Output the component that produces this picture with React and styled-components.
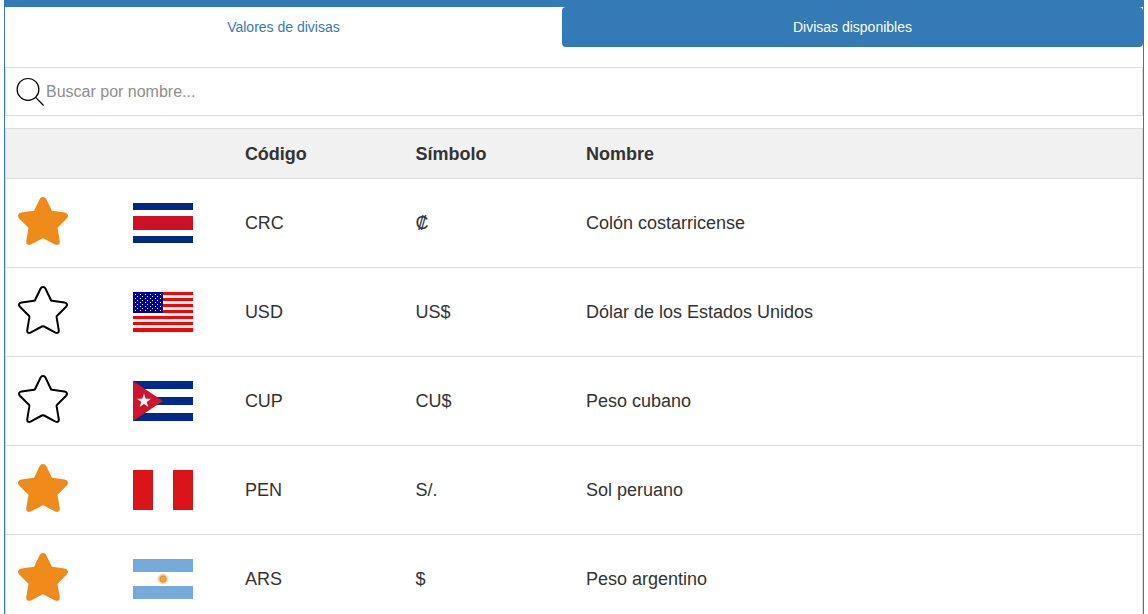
import React, { useCallback, useState } from 'react'
import styled, { createGlobalStyle } from 'styled-components'

const GlobalStyle = createGlobalStyle`
	* {
		box-sizing: border-box;
	}
	body {
		margin: 0;
		background: #fff;
		color: #333;
		font-family: Arial, 'Liberation Sans', sans-serif;
		font-size: 18px;
	}
`

const Panel = styled.main`
	margin: 0 4px;
	border: 1px solid #337ab7;
	border-top-width: 7px;
`

const Tabs = styled.nav`
	display: grid;
	grid-template-columns: 23fr 24fr;
	margin-bottom: 20px;
`

const Tab = styled.a`
	padding: 10px 15px;
	border-radius: 4px;
	background: ${props => (props.$active ? '#337ab7' : 'transparent')};
	color: ${props => (props.$active ? '#fff' : '#337ab7')};
	font-size: 14px;
	line-height: 20px;
	text-align: center;
	text-decoration: none;
`

const SearchBox = styled.label`
	display: flex;
	align-items: center;
	height: 49px;
	margin-bottom: 12px;
	padding: 0 10px;
	border: 1px solid #ddd;

	> svg {
		flex: none;
		width: 30px;
		height: 30px;
	}
`

const SearchInput = styled.input`
	flex: 1;
	min-width: 0;
	height: 100%;
	padding: 0;
	border: 0;
	outline: 0;
	background: transparent;
	color: #333;
	font-family: inherit;
	font-size: 16px;

	&::placeholder {
		color: #8e8e8e;
		opacity: 1;
	}
`

const Table = styled.table`
	width: 100%;
	table-layout: fixed;
	border: 1px solid #ddd;
	border-collapse: collapse;
`

const Col = styled.col`
	width: ${props => props.$width};
`

const HeadRow = styled.tr`
	background: #f1f1f1;
`

const Row = styled.tr`
	border-top: 1px solid #ddd;
`

const HeadCell = styled.th`
	padding: 13px 12px 11px;
	font-weight: bold;
	line-height: 25px;
	text-align: left;
`

const Cell = styled.td`
	padding: 12px;
	line-height: 26px;
	vertical-align: middle;
`

const StarButton = styled.button`
	display: block;
	width: 50px;
	height: 54px;
	padding: 0 0 4px;
	border: 0;
	background: none;
	cursor: pointer;

	> svg {
		display: block;
		width: 50px;
		height: 50px;
	}
`

const FlagImage = styled.svg`
	display: block;
	width: 64px;
	height: 64px;
`

const STAR_PATH =
	'M25 1C26.2 1 27 1.6 27.5 2.7L32.9 14Q33.2 14.7 34 14.8L46.4 16.5C49 16.9 49.8 19 48.1 20.8L39.1 29.8Q38.5 30.4 38.6 31.2L40.8 44.3C41 46.7 39.5 47.5 37.5 46.6L26.1 40.5Q25 40 23.9 40.5L12.5 46.6C10.5 47.5 9 46.7 9.2 44.3L11.4 31.2Q11.5 30.4 10.9 29.8L1.9 20.8C.2 19 1 16.9 3.6 16.5L16 14.8Q16.8 14.7 17.1 14L22.5 2.7C23 1.6 23.8 1 25 1Z'

function StarIcon({ filled }) {
	return (
		<svg viewBox="0 -1 50 50" aria-hidden="true">
			<path
				d={STAR_PATH}
				fill={filled ? '#ef8b1a' : 'none'}
				stroke={filled ? '#ef8b1a' : '#000'}
				strokeWidth="2"
				strokeLinejoin="round"
			/>
		</svg>
	)
}

function SearchIcon() {
	return (
		<svg viewBox="0 0 30 30" fill="none" stroke="#000" strokeWidth="1.2" aria-hidden="true">
			<circle cx="12" cy="12.4" r="10.9" />
			<path d="M19.4 20.2L27.6 28.5" />
		</svg>
	)
}

// canton stars, 9 staggered lines of 6 and 5
const usStars = []
for (let line = 0; line < 9; line++) {
	const odd = line % 2
	for (let i = 0; i < 6 - odd; i++) {
		usStars.push([2 + i * 5 + odd * 2, 2 + line * 2])
	}
}

// every flag is drawn on a 60x40 area
const flags = {
	CRC: (
		<>
			<path fill="#002b7f" d="M0 0h60v7H0zM0 33h60v7H0z" />
			<path fill="#ce1126" d="M0 13h60v14H0z" />
		</>
	),
	USD: (
		<>
			<path
				fill="#f00"
				d="M0 0h60v3H0zM0 6h60v3H0zM0 12h60v3H0zM0 18h60v3H0zM0 24h60v3H0zM0 30h60v3H0zM0 36h60v4H0z"
			/>
			<path fill="#00009c" d="M0 0h30v21H0z" />
			{usStars.map(([x, y]) => (
				<rect key={`${x}-${y}`} x={x} y={y} width="1" height="1" fill="#fff" />
			))}
		</>
	),
	CUP: (
		<>
			<path fill="#002a8f" d="M0 0h60v8H0zM0 16h60v8H0zM0 32h60v8H0z" />
			<path fill="#cf142b" d="M0 0L30 20L0 40z" />
			<path
				fill="#fff"
				d="M11 12.5L12.7 17.7H18.1L13.7 20.9L15.4 26.1L11 22.9L6.6 26.1L8.3 20.9L3.9 17.7H9.3z"
			/>
		</>
	),
	PEN: <path fill="#db141a" d="M0 0h20v40H0zM40 0h20v40H40z" />,
	ARS: (
		<>
			<path fill="#75aadb" d="M0 0h60v13H0zM0 27h60v13H0z" />
			<circle cx="30" cy="20" r="5.6" fill="#f4dfc8" />
			<circle cx="30" cy="20" r="4.4" fill="#ecc293" />
			<circle cx="30" cy="20" r="3" fill="#f0a832" stroke="#d08a3c" strokeWidth=".8" />
		</>
	)
}

function Flag({ code }) {
	return (
		<FlagImage viewBox="-2 -12 64 64" aria-hidden="true">
			{flags[code]}
		</FlagImage>
	)
}

const initialCurrencies = [
	{ code: 'CRC', symbol: '₡', name: 'Colón costarricense', isFavorite: true },
	{ code: 'USD', symbol: 'US$', name: 'Dólar de los Estados Unidos', isFavorite: false },
	{ code: 'CUP', symbol: 'CU$', name: 'Peso cubano', isFavorite: false },
	{ code: 'PEN', symbol: 'S/.', name: 'Sol peruano', isFavorite: true },
	{ code: 'ARS', symbol: '$', name: 'Peso argentino', isFavorite: true }
]

function CurrencyRow({ currency, onToggle }) {
	const { code, symbol, name, isFavorite } = currency

	return (
		<Row>
			<Cell>
				<StarButton
					type="button"
					aria-label={`Favorita ${code}`}
					aria-pressed={isFavorite}
					onClick={() => onToggle(code)}
				>
					<StarIcon filled={isFavorite} />
				</StarButton>
			</Cell>
			<Cell>
				<Flag code={code} />
			</Cell>
			<Cell>{code}</Cell>
			<Cell>{symbol}</Cell>
			<Cell>{name}</Cell>
		</Row>
	)
}

export default function App() {
	const [currencies, setCurrencies] = useState(initialCurrencies)
	const [search, setSearch] = useState('')

	const handleToggle = useCallback(code => {
		setCurrencies(list =>
			list.map(c => (c.code === code ? { ...c, isFavorite: !c.isFavorite } : c))
		)
	}, [])

	const visible = currencies.filter(c =>
		c.name.toLowerCase().includes(search.toLowerCase())
	)

	return (
		<>
			<GlobalStyle />
			<Panel>
				<Tabs>
					<Tab href="#valores">Valores de divisas</Tab>
					<Tab href="#disponibles" $active aria-current="page">
						Divisas disponibles
					</Tab>
				</Tabs>
				<SearchBox>
					<SearchIcon />
					<SearchInput
						type="text"
						aria-label="Buscar por nombre"
						placeholder="Buscar por nombre..."
						value={search}
						onChange={e => setSearch(e.target.value)}
					/>
				</SearchBox>
				<Table>
					<colgroup>
						<Col $width="10%" />
						<Col $width="10%" />
						<Col $width="15%" />
						<Col $width="15%" />
						<Col $width="50%" />
					</colgroup>
					<thead>
						<HeadRow>
							<HeadCell />
							<HeadCell />
							<HeadCell scope="col">Código</HeadCell>
							<HeadCell scope="col">Símbolo</HeadCell>
							<HeadCell scope="col">Nombre</HeadCell>
						</HeadRow>
					</thead>
					<tbody>
						{visible.map(currency => (
							<CurrencyRow
								key={currency.code}
								currency={currency}
								onToggle={handleToggle}
							/>
						))}
					</tbody>
				</Table>
			</Panel>
		</>
	)
}
